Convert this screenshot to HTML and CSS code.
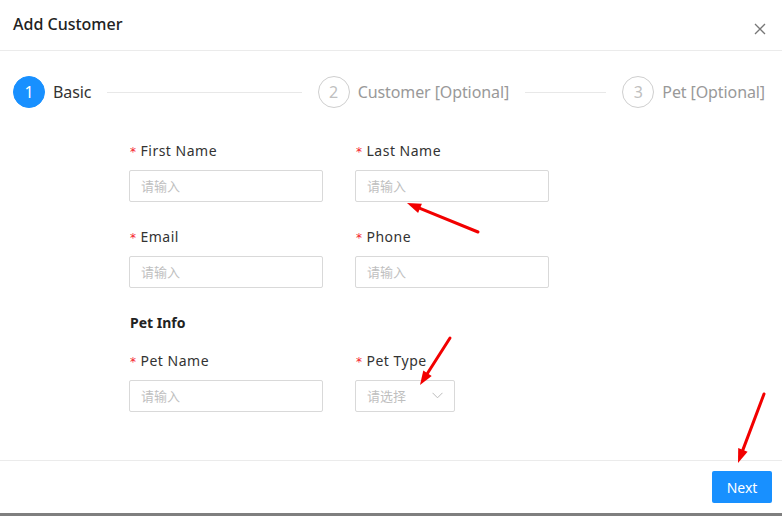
FILE: index.html
```html
<!DOCTYPE html>
<html lang="en">
  <head>
    <meta charset="UTF-8" />
    <meta name="viewport" content="width=device-width, initial-scale=1.0" />
    <title>Add Customer</title>
    <link rel="stylesheet" href="styles.css">
  </head>
  <body>
    <div class="modal">
      <div class="modal-header">
        <div class="modal-title">Add Customer</div>
        <svg class="close" width="12" height="12" viewBox="0 0 12 12">
          <path d="M1 1 L11 11 M11 1 L1 11" stroke="#777" stroke-width="1.3" fill="none" />
        </svg>
      </div>
      <div class="modal-body">
        <div class="steps">
          <div class="step active">
            <div class="step-icon">1</div>
            <div class="step-title">Basic</div>
            <div class="step-line"></div>
          </div>
          <div class="step">
            <div class="step-icon">2</div>
            <div class="step-title">Customer [Optional]</div>
            <div class="step-line"></div>
          </div>
          <div class="step last">
            <div class="step-icon">3</div>
            <div class="step-title">Pet [Optional]</div>
          </div>
        </div>

        <div class="form">
          <div class="form-row">
            <div class="form-item">
              <label class="label"><span class="req">*</span>First Name</label>
              <div class="input">请输入</div>
            </div>
            <div class="form-item">
              <label class="label"><span class="req">*</span>Last Name</label>
              <div class="input">请输入</div>
            </div>
          </div>
          <div class="form-row">
            <div class="form-item">
              <label class="label"><span class="req">*</span>Email</label>
              <div class="input">请输入</div>
            </div>
            <div class="form-item">
              <label class="label"><span class="req">*</span>Phone</label>
              <div class="input">请输入</div>
            </div>
          </div>
          <div class="section-title">Pet Info</div>
          <div class="form-row">
            <div class="form-item">
              <label class="label"><span class="req">*</span>Pet Name</label>
              <div class="input">请输入</div>
            </div>
            <div class="form-item">
              <label class="label"><span class="req">*</span>Pet Type</label>
              <div class="input select">
                <span>请选择</span>
                <svg width="11" height="7" viewBox="0 0 11 7">
                  <path d="M0.5 0.8 L5.5 5.8 L10.5 0.8" stroke="#bbb" stroke-width="1" fill="none" />
                </svg>
              </div>
            </div>
          </div>
        </div>
      </div>
      <div class="modal-footer">
        <button class="btn-primary">Next</button>
      </div>
    </div>
    <div class="taskbar"></div>

    <!-- red annotation arrows -->
    <svg class="marks" width="782" height="516" viewBox="0 0 782 516">
      <g stroke="#f20000" stroke-width="3" stroke-linecap="round" fill="#f20000">
        <line x1="478" y1="232" x2="420" y2="208.3" />
        <polygon stroke="none" points="407,203 421.9,203.7 418.1,212.9" />
        <line x1="450" y1="338" x2="427.5" y2="373.2" />
        <polygon stroke="none" points="420,385 431.7,375.9 423.3,370.5" />
        <line x1="764" y1="394" x2="742.9" y2="449.9" />
        <polygon stroke="none" points="738,463 747.6,451.7 738.2,448.1" />
      </g>
    </svg>
  </body>
</html>
```

FILE: styles.css
```css
body {
  margin: 0;
  width: 782px;
  height: 516px;
  overflow: hidden;
  background: #fff;
  font-family: "Noto Sans", "Noto Sans CJK SC", sans-serif;
  color: #333;
}
.modal {
  height: 513px;
  display: flex;
  flex-direction: column;
}
.modal-header {
  height: 50px;
  border-bottom: 1px solid #ebebeb;
  display: flex;
  align-items: center;
  justify-content: space-between;
  padding: 0 16px 0 13px;
}
.modal-title {
  font-size: 16px;
  font-weight: 500;
  color: #222;
  margin-top: -3px;
}
.close {
  margin-top: 8px;
}
.modal-body {
  flex: 1;
  padding-top: 25px;
}
/* Steps */
.steps {
  display: flex;
  padding: 0 17px 0 13px;
}
.step {
  flex: 1;
  display: flex;
  align-items: center;
  height: 32px;
}
.step.last {
  flex: none;
}
.step-icon {
  width: 30px;
  height: 30px;
  border: 1px solid #cfcfcf;
  border-radius: 50%;
  display: flex;
  align-items: center;
  justify-content: center;
  font-size: 16px;
  color: #c0c0c0;
  flex: none;
}
.step-title {
  margin-left: 8px;
  font-size: 16px;
  color: #999;
  letter-spacing: -0.1px;
  white-space: nowrap;
}
.step.active .step-icon {
  background: #1890ff;
  border-color: #1890ff;
  color: #fff;
}
.step.active .step-title {
  color: #333;
}
.step-line {
  flex: 1;
  height: 1px;
  background: #e8e8e8;
  margin: 0 16px;
}
/* Form */
.form {
  margin: 32px 0 0 129px;
}
.form-row {
  display: flex;
  gap: 32px;
}
.form-item {
  margin-bottom: 24px;
}
.label {
  display: block;
  height: 22px;
  line-height: 22px;
  font-size: 14px;
  color: #333;
  letter-spacing: 0.5px;
  margin-bottom: 8px;
}
.req {
  color: #f5222d;
  margin: 0 4px 0 1px;
  font-family: "DejaVu Sans", sans-serif;
  font-size: 12px;
}
.input {
  box-sizing: border-box;
  width: 194px;
  height: 32px;
  border: 1px solid #d9d9d9;
  border-radius: 2px;
  padding: 0 11px;
  display: flex;
  align-items: center;
  font-size: 13px;
  color: #bfbfbf;
  padding-bottom: 1px;
}
.input.select {
  width: 100px;
  justify-content: space-between;
  padding-right: 11px;
}
.section-title {
  font-size: 14px;
  font-weight: 700;
  color: #222;
  height: 22px;
  line-height: 22px;
  margin: 0 0 16px 1px;
}
/* Footer */
.modal-footer {
  border-top: 1px solid #ebebeb;
  padding: 10px;
  display: flex;
  justify-content: flex-end;
}
.btn-primary {
  width: 60px;
  height: 32px;
  background: #1890ff;
  color: #fff;
  border: none;
  border-radius: 2px;
  font-family: "Noto Sans", sans-serif;
  font-size: 14px;
}
.taskbar {
  height: 3px;
  background: #7f7f7f;
}
.marks {
  position: absolute;
  left: 0;
  top: 0;
  pointer-events: none;
}
```
